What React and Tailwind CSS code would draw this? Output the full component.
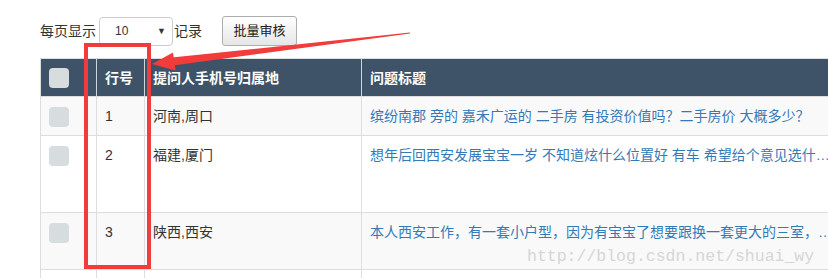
import React from 'react';

const rows = [
  {
    id: 1,
    place: '河南,周口',
    title: '缤纷南郡 旁的 嘉禾广运的 二手房 有投资价值吗？二手房价 大概多少？',
    h: 'h-[39px]',
    bg: 'bg-[#f9f9f9]',
  },
  {
    id: 2,
    place: '福建,厦门',
    title: '想年后回西安发展宝宝一岁 不知道炫什么位置好 有车 希望给个意见选什么地段',
    h: 'h-[77px]',
    bg: 'bg-white',
  },
  {
    id: 3,
    place: '陕西,西安',
    title: '本人西安工作，有一套小户型，因为有宝宝了想要跟换一套更大的三室，两厅',
    h: 'h-[57px]',
    bg: 'bg-[#f9f9f9]',
  },
  { id: 4, place: '', title: '', h: 'h-[20px]', bg: 'bg-white' },
];

function Box() {
  return <div className="mt-px h-5 w-5 rounded-[4px] bg-[#d7dcdf]" />;
}

export default function App() {
  return (
    <div className="relative h-[278px] w-[828px] overflow-hidden bg-white font-['Liberation_Sans','Noto_Sans_CJK_SC',sans-serif] text-sm text-[#333]">
      {/* 顶部工具栏 */}
      <div className="flex items-center pl-10 pt-4">
        <span className="mr-[3px]">每页显示</span>
        <div className="flex h-[29px] w-[74px] items-center justify-between rounded-[4px] border border-[#ccc] bg-white pl-[15px] pr-[6px] text-xs">
          <span>10</span>
          <span className="text-[9px] text-[#333]">▼</span>
        </div>
        <span className="ml-px">记录</span>
        <button className="ml-5 h-[30px] w-[75px] rounded-[3px] border border-[#adadad] bg-gradient-to-b from-white to-[#e6e6e6] text-[13px] text-[#222]">
          批量审核
        </button>
      </div>

      {/* 表格 */}
      <div className="ml-10 mt-3 w-[802px]">
        <div className="grid h-[39px] grid-cols-[56px_48px_217px_481px] border-y border-[#ddd] bg-[#3e5368] font-bold text-white">
          <div className="flex items-center border-l border-[#ddd] pl-2">
            <Box />
          </div>
          <div className="flex items-center border-l border-[#cfd5db] pl-2">行号</div>
          <div className="flex items-center border-l border-[#cfd5db] pl-2">提问人手机号归属地</div>
          <div className="flex items-center border-l border-[#cfd5db] pl-2">问题标题</div>
        </div>
        {rows.map((r) => (
          <div
            key={r.id}
            className={`grid grid-cols-[56px_48px_217px_481px] border-b border-[#ddd] ${r.h} ${r.bg}`}
          >
            <div className="border-l border-[#ddd] pl-2 pt-[9px]">{r.place && <Box />}</div>
            <div className="border-l border-[#ddd] pl-2 pt-[9px] leading-5">{r.place && r.id}</div>
            <div className="border-l border-[#ddd] pl-2 pt-[9px] leading-5">{r.place}</div>
            <div className="min-w-0 border-l border-[#ddd] pl-2 pr-[7px] pt-[9px] leading-5">
              <div className="truncate text-[#337ab7]">{r.title}</div>
            </div>
          </div>
        ))}
      </div>

      {/* 水印 */}
      <div className="absolute left-[527px] top-[247px] font-['Liberation_Mono',monospace] text-[16.5px] leading-5 text-[#d6d6d6]">
        http://blog.csdn.net/shuai_wy
      </div>

      {/* 红色标注 */}
      <div className="absolute left-[84px] top-[43px] h-[226px] w-[67px] border-4 border-[#f23b3b]" />
      <svg className="absolute left-0 top-0" width="828" height="278" viewBox="0 0 828 278">
        <polygon points="152,64 173,52.5 175.5,70.5" fill="#f23b3b" />
        <polygon points="172,57.5 410,32.6 410,33.4 173,65.5" fill="#f23b3b" />
      </svg>
    </div>
  );
}
